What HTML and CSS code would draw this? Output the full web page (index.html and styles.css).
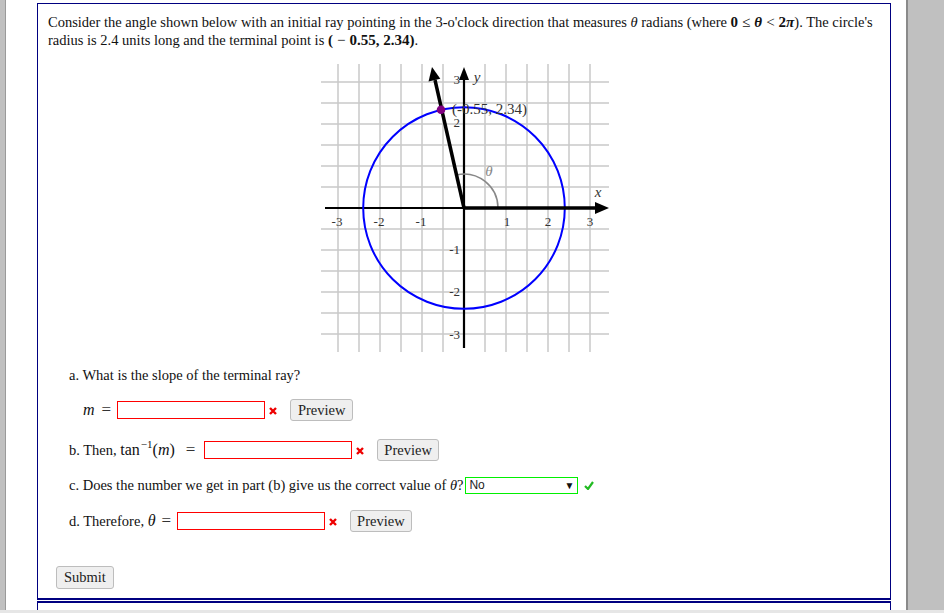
FILE: index.html
```html
<!DOCTYPE html>
<html>
<head>
<meta charset="utf-8">
<link rel="stylesheet" href="styles.css">
</head>
<body>
<div class="frame">
  <div class="row">
    <div class="lbar"></div>
    <div class="page">
      <div class="box">
        <p class="intro">Consider the angle shown below with an initial ray pointing in the 3-o'clock direction that measures <i class="mi">θ</i> radians (where <b class="mb">0<span class="op">≤</span><i>θ</i><span class="op">&lt;</span>2<i>π</i></b>). The circle's radius is 2.4 units long and the terminal point is <b class="mb">(<span class="op">−</span>0.55, 2.34)</b>.</p>

        <div class="graph">
          <svg width="300" height="300" viewBox="0 0 300 300" xmlns="http://www.w3.org/2000/svg">
            <g stroke="#c8c8c8" stroke-width="1.5">
              <line x1="24" y1="6" x2="24" y2="294"/>
              <line x1="45" y1="6" x2="45" y2="294"/>
              <line x1="66" y1="6" x2="66" y2="294"/>
              <line x1="87" y1="6" x2="87" y2="294"/>
              <line x1="108" y1="6" x2="108" y2="294"/>
              <line x1="129" y1="6" x2="129" y2="294"/>
              <line x1="171" y1="6" x2="171" y2="294"/>
              <line x1="192" y1="6" x2="192" y2="294"/>
              <line x1="213" y1="6" x2="213" y2="294"/>
              <line x1="234" y1="6" x2="234" y2="294"/>
              <line x1="255" y1="6" x2="255" y2="294"/>
              <line x1="276" y1="6" x2="276" y2="294"/>
              <line x1="7" y1="24" x2="295" y2="24"/>
              <line x1="7" y1="45" x2="295" y2="45"/>
              <line x1="7" y1="66" x2="295" y2="66"/>
              <line x1="7" y1="87" x2="295" y2="87"/>
              <line x1="7" y1="108" x2="295" y2="108"/>
              <line x1="7" y1="129" x2="295" y2="129"/>
              <line x1="7" y1="171" x2="295" y2="171"/>
              <line x1="7" y1="192" x2="295" y2="192"/>
              <line x1="7" y1="213" x2="295" y2="213"/>
              <line x1="7" y1="234" x2="295" y2="234"/>
              <line x1="7" y1="255" x2="295" y2="255"/>
              <line x1="7" y1="276" x2="295" y2="276"/>
            </g>
            <line x1="11" y1="150" x2="150" y2="150" stroke="#000" stroke-width="2.2"/>
            <line x1="150" y1="290" x2="150" y2="20" stroke="#000" stroke-width="2.2"/>
            <polygon points="150,9 145,22 155,22" fill="#000"/>
            <g font-family="Liberation Serif, serif" font-size="13" fill="#333" text-anchor="middle">
              <text x="23" y="168">-3</text>
              <text x="65" y="168">-2</text>
              <text x="107" y="168">-1</text>
              <text x="193" y="168">1</text>
              <text x="234" y="168">2</text>
              <text x="276" y="168">3</text>
            </g>
            <g font-family="Liberation Serif, serif" font-size="13" fill="#333" text-anchor="end">
              <text x="146" y="196">-1</text>
              <text x="146" y="238">-2</text>
              <text x="146" y="281">-3</text>
              <text x="146" y="69">2</text>
              <text x="146" y="26">3</text>
            </g>
            <text x="163" y="24" font-family="Liberation Serif, serif" font-style="italic" font-size="15" fill="#333" text-anchor="middle">y</text>
            <text x="284" y="139" font-family="Liberation Serif, serif" font-style="italic" font-size="15" fill="#333" text-anchor="middle">x</text>
            <circle cx="150" cy="150" r="100.8" fill="none" stroke="#0000ff" stroke-width="2"/>
            <path d="M184,150 A34,34 0 0 0 142.3,116.9" fill="none" stroke="#888" stroke-width="1.5"/>
            <text x="175" y="118" font-family="Liberation Serif, serif" font-style="italic" font-size="15" fill="#888" text-anchor="middle">θ</text>
            <line x1="150" y1="150" x2="283" y2="150" stroke="#000" stroke-width="3.5"/>
            <polygon points="295,150 281,144 281,156" fill="#000"/>
            <line x1="150" y1="150" x2="121" y2="22" stroke="#000" stroke-width="3.5"/>
            <polygon points="118,9 114.5,23.5 126.3,20.8" fill="#000"/>
            <circle cx="127" cy="51.7" r="4.3" fill="#800080"/>
            <text x="138" y="56" font-family="Liberation Serif, serif" font-size="15" fill="#333">(-0.55, 2.34)</text>
          </svg>
        </div>

        <div class="qtext">a. What is the slope of the terminal ray?</div>

        <div class="qrow qm">
          <span class="math"><i>m</i><span class="eq">=</span></span>
          <span class="ans bad"></span>
          <svg class="xmark" width="8" height="8" viewBox="0 0 8 8"><path d="M1,1 L7,7 M7,1 L1,7" stroke="#e00" stroke-width="2.4"/></svg>
          <button class="btn">Preview</button>
        </div>

        <div class="qrow qb">
          <span class="lbl">b. Then, <span class="math">tan<sup>−1</sup>(<i>m</i>)<span class="eq">=</span></span></span>
          <span class="ans bad"></span>
          <svg class="xmark" width="8" height="8" viewBox="0 0 8 8"><path d="M1,1 L7,7 M7,1 L1,7" stroke="#e00" stroke-width="2.4"/></svg>
          <button class="btn">Preview</button>
        </div>

        <div class="qrow qc">
          <span class="lbl">c. Does the number we get in part (b) give us the correct value of <i class="mi">θ</i>?</span>
          <span class="select"><span>No</span><span class="arrow">▼</span></span>
          <svg class="check" width="10" height="9" viewBox="0 0 10 9"><path d="M1,5 L4,8 L9,1" fill="none" stroke="#22bb22" stroke-width="2.2"/></svg>
        </div>

        <div class="qrow qd">
          <span class="lbl">d. Therefore, <span class="math"><i>θ</i><span class="eq">=</span></span></span>
          <span class="ans bad"></span>
          <svg class="xmark" width="8" height="8" viewBox="0 0 8 8"><path d="M1,1 L7,7 M7,1 L1,7" stroke="#e00" stroke-width="2.4"/></svg>
          <button class="btn">Preview</button>
        </div>

        <div class="submit-row">
          <button class="btn submit">Submit</button>
        </div>
      </div>
      <div class="box2"></div>
    </div>
    <div class="rbar"></div>
  </div>
  <div class="hbar"></div>
</div>
</body>
</html>
```

FILE: styles.css
```css
html, body {
  margin: 0;
  padding: 0;
  background: #ffffff;
}
body {
  width: 944px;
  height: 613px;
  overflow: hidden;
  font-family: "Liberation Serif", "Times New Roman", serif;
  font-size: 14.5px;
  color: #111;
}
.frame {
  display: flex;
  flex-direction: column;
  height: 613px;
}
.row {
  display: flex;
  height: 610px;
  overflow: hidden;
}
.lbar {
  width: 5px;
  background: #c0c0c0;
  border-right: 1px solid #9a9a9a;
}
.rbar {
  width: 36px;
  background: #c0c0c0;
  border-left: 2px solid #8a8a8a;
}
.hbar {
  height: 3px;
  background: #e6e6e6;
}
.page {
  width: 900px;
  padding: 3px 15px 0 31px;
  box-sizing: border-box;
}
.box {
  border: 1px solid #000080;
  border-bottom-width: 2px;
  height: 597px;
  box-sizing: border-box;
  padding: 0 10px 0 10px;
  display: flex;
  flex-direction: column;
}
.box2 {
  margin-top: 1px;
  border: 1px solid #000080;
  border-top-width: 2px;
  height: 40px;
}
.intro {
  margin: 9px 0 0 0;
  line-height: 18px;
}
.mi { font-style: italic; }
.mb { font-weight: bold; font-size: 15px; }
.mb i { font-style: italic; }
.op {
  font-weight: normal;
  margin: 0 4px;
}
.graph {
  margin-top: 9px;
  display: flex;
  justify-content: center;
  height: 300px;
  margin-left: -1px;
}
.graph svg { display: block; }
.qtext {
  margin: 8px 0 0 21px;
  line-height: 18px;
}
.qrow {
  display: flex;
  align-items: center;
  height: 22px;
  margin-left: 21px;
}
.qm { margin-top: 15px; margin-left: 35px; }
.qb { margin-top: 18px; }
.qc { margin-top: 13px; }
.qd { margin-top: 14px; }
.math { font-size: 16px; }
.math i { font-style: italic; }
.math sup { font-size: 11px; vertical-align: 7px; line-height: 0; margin-left: 1px; }
.eq {
  margin: 0 5px 0 6px;
  color: #333;
  font-size: 17px;
}
.qb .eq { margin: 0 8px 0 11px; }
.qm .math i { margin-right: 1px; }
.ans {
  display: inline-block;
  width: 146px;
  height: 16px;
  border: 1px solid #ff0000;
  background: #fff;
  margin-left: 1px;
}
.xmark {
  margin-left: 4px;
  margin-top: 2px;
}
.btn {
  font-family: "Liberation Serif", "Times New Roman", serif;
  font-size: 14.5px;
  color: #222;
  background: #efefef;
  border: 1px solid #bdbdbd;
  border-radius: 3px;
  height: 22px;
  padding: 0 6px;
  margin-left: 13px;
}
.qm .btn { width: 63px; }
.select {
  display: inline-flex;
  align-items: center;
  justify-content: space-between;
  box-sizing: border-box;
  width: 113px;
  height: 17px;
  border: 1px solid #00f000;
  margin-left: 2px;
  padding: 0 3px 0 3px;
  font-family: "Liberation Sans", Arial, sans-serif;
  font-size: 12px;
  color: #222;
}
.arrow { font-size: 10px; color: #111; }
.check { margin-left: 6px; }
.submit-row {
  margin-top: 34px;
  margin-left: 8px;
}
.submit {
  margin-left: 0;
  height: 23px;
  padding: 0 7px;
}
```
